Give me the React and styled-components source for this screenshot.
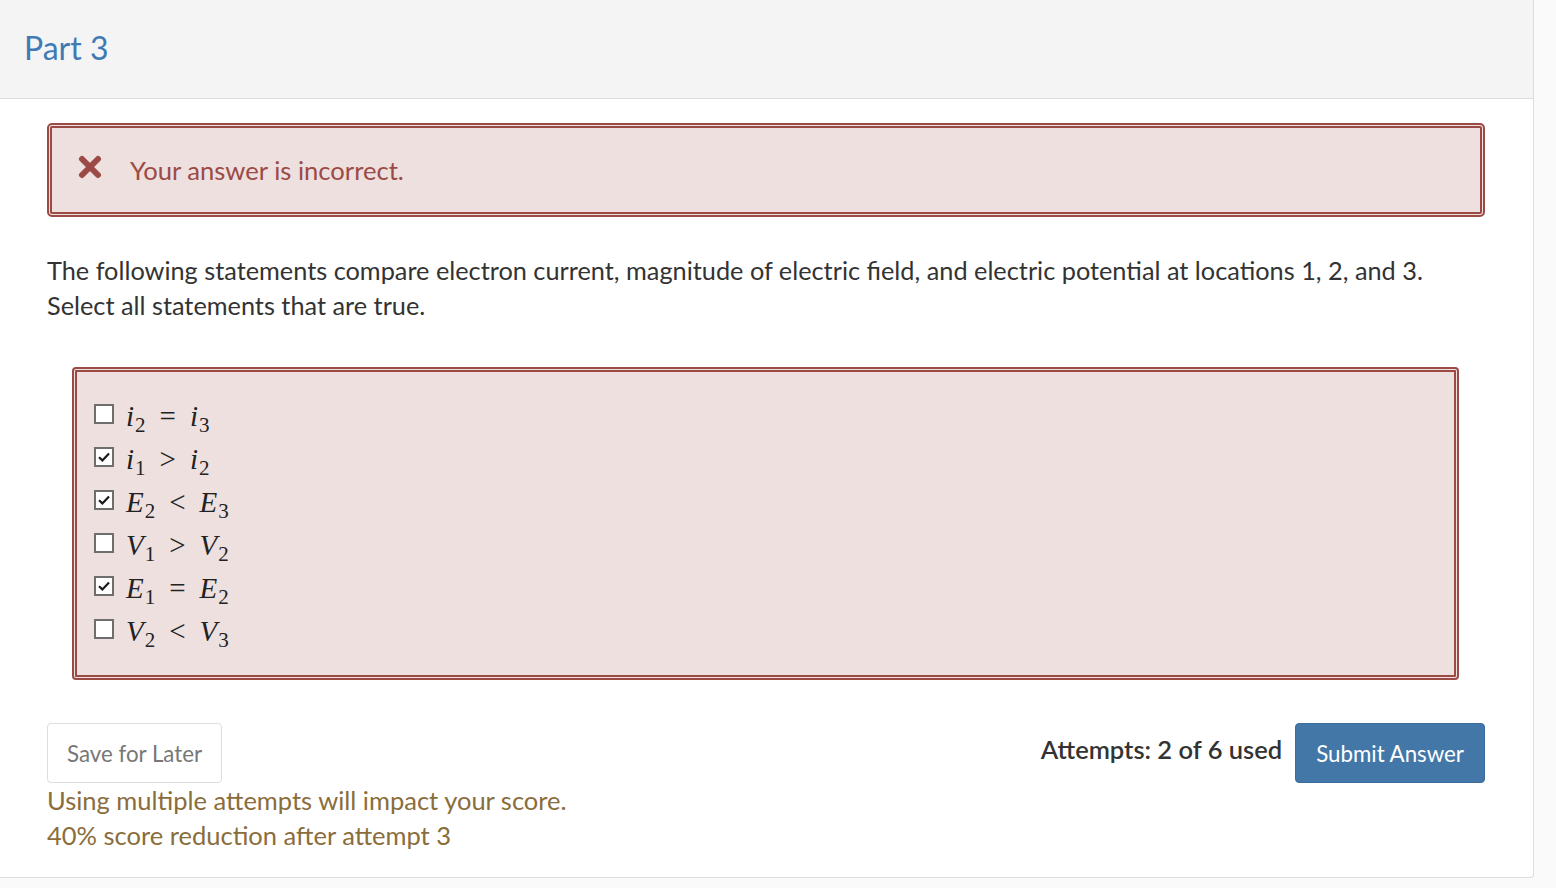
import React from 'react';
import styled, { createGlobalStyle } from 'styled-components';

// -------------------------------------------------

const options = [
  { checked: false, a: 'i', as: '2', op: '=', b: 'i', bs: '3' },
  { checked: true, a: 'i', as: '1', op: '>', b: 'i', bs: '2' },
  { checked: true, a: 'E', as: '2', op: '<', b: 'E', bs: '3' },
  { checked: false, a: 'V', as: '1', op: '>', b: 'V', bs: '2' },
  { checked: true, a: 'E', as: '1', op: '=', b: 'E', bs: '2' },
  { checked: false, a: 'V', as: '2', op: '<', b: 'V', bs: '3' },
];

const Check = ({ checked }) => (
  <Box>
    {checked && (
      <svg width="14" height="14" viewBox="0 0 14 14">
        <path d="M2 7.2 L5.4 10.4 L12 3.4" fill="none" stroke="#1a1a1a" strokeWidth="2.2" />
      </svg>
    )}
  </Box>
);

export default function App() {
  return (
    <>
      <GlobalStyle />
      <Page>
        <Card>
          <Header>
            <Title>Part 3</Title>
          </Header>
          <Body>
            <Alert>
              <svg width="24" height="24" viewBox="0 0 24 24">
                <path d="M4 4 L20 20 M20 4 L4 20" stroke="#9b4a45" strokeWidth="6" strokeLinecap="round" />
              </svg>
              <span>Your answer is incorrect.</span>
            </Alert>
            <Question>
              The following statements compare electron current, magnitude of electric field, and electric potential at locations 1, 2, and 3.
              <br />
              Select all statements that are true.
            </Question>
            <Options>
              {options.map((o, i) => (
                <Option key={i}>
                  <Check checked={o.checked} />
                  <Math>
                    <Var>{o.a}</Var>
                    <Sub>{o.as}</Sub>
                    <Op>{o.op}</Op>
                    <Var>{o.b}</Var>
                    <Sub>{o.bs}</Sub>
                  </Math>
                </Option>
              ))}
            </Options>
            <Footer>
              <div>
                <SaveButton>Save for Later</SaveButton>
                <Warning>
                  Using multiple attempts will impact your score.
                  <br />
                  40% score reduction after attempt 3
                </Warning>
              </div>
              <Actions>
                <Attempts>Attempts: 2 of 6 used</Attempts>
                <SubmitButton>Submit Answer</SubmitButton>
              </Actions>
            </Footer>
          </Body>
        </Card>
      </Page>
    </>
  );
}

// STYLING ----------------------------------------
const GlobalStyle = createGlobalStyle`
  html, body {
    margin: 0;
    padding: 0;
    background: #fafafa;
  }
  body {
    font-family: Lato, 'Open Sans', sans-serif;
    color: #333;
  }
`;

const Page = styled.div`
  width: 1556px;
  height: 888px;
  overflow: hidden;
`;

const Card = styled.div`
  width: 1534px;
  height: 878px;
  box-sizing: border-box;
  background: #fff;
  border-right: 1px solid #ddd;
  border-bottom: 1px solid #ddd;
  border-bottom-right-radius: 4px;
`;

const Header = styled.div`
  height: 98px;
  background: #f4f4f4;
  border-bottom: 1px solid #ddd;
  display: flex;
  align-items: center;
  padding-left: 24px;
`;

const Title = styled.h2`
  margin: -4px 0 0;
  font-weight: 400;
  font-size: 32px;
  color: #3f7ab5;
`;

const Body = styled.div`
  padding: 24px 48px 0 47px;
`;

const Alert = styled.div`
  height: 94px;
  box-sizing: border-box;
  border: 5px double #9b4a45;
  border-radius: 5px;
  background: #ede0df;
  display: flex;
  align-items: center;
  gap: 28px;
  padding-left: 26px;
  color: #9b4a45;
  font-size: 25.6px;

  svg {
    margin-top: -6px;
  }
`;

const Question = styled.p`
  margin: 36px 0 0;
  font-size: 25.3px;
  line-height: 35px;
  color: #333;
`;

const Options = styled.div`
  margin: 44px 26px 0 25px;
  height: 313px;
  box-sizing: border-box;
  border: 5px double #9b4a45;
  border-radius: 4px;
  background: #ede0df;
  padding: 23px 0 0 17px;
  display: flex;
  flex-direction: column;
`;

const Option = styled.div`
  height: 43px;
  display: flex;
  align-items: center;
  gap: 12px;
`;

const Box = styled.span`
  width: 20px;
  height: 20px;
  box-sizing: border-box;
  border: 2px solid #6e6e6e;
  background: #fff;
  display: inline-flex;
  align-items: center;
  justify-content: center;
  margin-top: -6px;
`;

const Math = styled.span`
  font-family: 'Liberation Serif', 'Times New Roman', serif;
  font-size: 29px;
  color: #222;
  display: inline-flex;
  align-items: baseline;
`;

const Var = styled.i`
  padding-right: 1px;
`;

const Sub = styled.span`
  font-size: 21px;
  position: relative;
  top: 6px;
`;

const Op = styled.span`
  margin: 0 14px;
`;

const Footer = styled.div`
  margin-top: 43px;
  display: flex;
  justify-content: space-between;
  align-items: flex-start;
`;

const SaveButton = styled.button`
  height: 60px;
  padding: 0 19px;
  border: 1px solid #ddd;
  border-radius: 4px;
  background: #fff;
  color: #777;
  font-family: Lato, sans-serif;
  font-size: 22.3px;
`;

const Warning = styled.div`
  margin-top: 0;
  font-size: 25.5px;
  line-height: 35px;
  color: #8a6d3b;
`;

const Actions = styled.div`
  display: flex;
  align-items: flex-start;
  gap: 13px;
`;

const Attempts = styled.span`
  font-size: 25.5px;
  font-weight: 600;
  color: #333;
  margin-top: 11px;
`;

const SubmitButton = styled.button`
  height: 60px;
  padding: 0 20px;
  border: 1px solid #3b6c9c;
  border-radius: 4px;
  background: #4377a8;
  color: #fff;
  font-family: Lato, sans-serif;
  font-size: 22.3px;
`;
